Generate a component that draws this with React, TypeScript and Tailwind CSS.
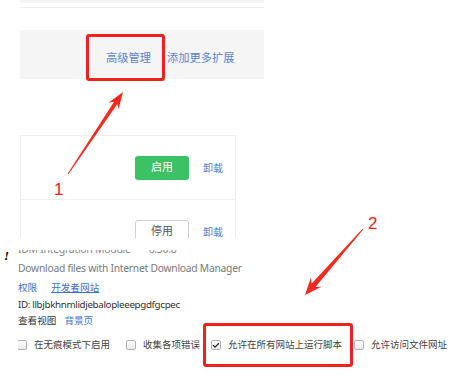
import { Check } from "lucide-react";

const cjk = "font-['Noto_Sans','Noto_Sans_CJK_SC',sans-serif]";

function Box({ checked }: { checked?: boolean }) {
  return (
    <span className="w-[10px] h-[10px] shrink-0 rounded-[2px] border border-[#b3b3b3] bg-gradient-to-b from-white to-[#e9e9e9] flex items-center justify-center">
      {checked && <Check size={9} strokeWidth={3.5} className="text-[#222]" />}
    </span>
  );
}

function ExtRow({ on }: { on: boolean }) {
  return (
    <div className="h-[63px] flex items-center justify-end pr-[12px] gap-[14px]">
      {on ? (
        <button className="w-[54px] h-[24px] rounded-[3px] bg-[#3cc164] text-white text-[11px]">
          启用
        </button>
      ) : (
        <button className="w-[54px] h-[24px] rounded-[3px] bg-white border border-[#cfcfcf] text-[#555] text-[11px]">
          停用
        </button>
      )}
      <span className="text-[10px] text-[#4f7ed6] mt-[2px]">卸载</span>
    </div>
  );
}

export default function App() {
  const opts = [
    { label: "在无痕模式下启用", ml: "ml-0", checked: false },
    { label: "收集各项错误", ml: "ml-[16px]", checked: false },
    { label: "允许在所有网站上运行脚本", ml: "ml-[11px]", checked: true },
    { label: "允许访问文件网址", ml: "ml-[12px]", checked: false },
  ];

  return (
    <div className={`relative w-[474px] h-[389px] overflow-hidden bg-white ${cjk}`}>
      {/* top strip */}
      <div className="ml-[20px] w-[244px] h-[3px] bg-[#f6f6f6]" />
      <div className="ml-[20px] w-[244px] mt-[4px] h-px bg-[#eeeeee]" />
      <div className="ml-[20px] w-[244px] mt-[22px] h-[49px] bg-[#f5f5f5] flex items-start pl-[86px] pt-[21px] gap-[16px] text-[11.25px] leading-[14px] text-[#5b86d6]">
        <span>高级管理</span>
        <span>添加更多扩展</span>
      </div>

      {/* extension card */}
      <div className="ml-[20px] mt-[56px] w-[216px] h-[103px] overflow-hidden border border-b-0 border-[#ececec]">
        <ExtRow on />
        <div className="h-px bg-[#f0f0f0]" />
        <ExtRow on={false} />
      </div>

      {/* details */}
      <div className="mt-[12px] flex">
        <div className="w-[18px] pl-[4px] pt-[1px] text-[13px] leading-[10px] font-bold text-black font-['Liberation_Serif',serif] italic">
          !
        </div>
        <div className="flex flex-col overflow-hidden h-[120px]">
          <div className="-mt-[10px] h-[18px] leading-[18px] text-[10.5px] text-[#888] whitespace-nowrap tracking-[-0.3px]">
            IDM Integration Module<span className="ml-[18px]">6.30.8</span>
          </div>
          <div className="mt-[1px] h-[18px] leading-[18px] text-[10.3px] text-[#7a7a7a] whitespace-nowrap tracking-[-0.25px]">
            Download files with Internet Download Manager
          </div>
          <div className="mt-[2px] h-[18px] leading-[18px] text-[9.6px] flex gap-[14px] text-[#3f6fcd]">
            <span>权限</span>
            <span className="underline">开发者网站</span>
          </div>
          <div className="h-[16px] leading-[16px] text-[9.8px] text-[#333] whitespace-nowrap tracking-[-0.35px]">
            ID: llbjbkhnmlidjebalopleeepgdfgcpec
          </div>
          <div className="h-[16px] leading-[16px] text-[9.6px] flex gap-[8px]">
            <span className="text-[#333]">查看视图</span>
            <span className="text-[#3f6fcd]">背景页</span>
          </div>
          <div className="mt-[6px] h-[20px] -ml-px flex items-center text-[9.5px] text-[#444] whitespace-nowrap">
            {opts.map((o) => (
              <div key={o.label} className={`flex items-center gap-[7px] ${o.ml}`}>
                <Box checked={o.checked} />
                <span>{o.label}</span>
              </div>
            ))}
          </div>
        </div>
      </div>

      {/* annotations */}
      <div className="absolute left-[86px] top-[34px] w-[79px] h-[47px] border-[3px] border-[#f1211b] rounded-[3px]" />
      <div className="absolute left-[203px] top-[323px] w-[150px] h-[44px] border-[3px] border-[#f1211b] rounded-[3px]" />
      <span className="absolute left-[54px] top-[180px] text-[17px] leading-[20px] text-[#f1211b] font-['Liberation_Sans',sans-serif]">
        1
      </span>
      <span className="absolute left-[368px] top-[214px] text-[17px] leading-[20px] text-[#f1211b] font-['Liberation_Sans',sans-serif]">
        2
      </span>
      <svg className="absolute left-0 top-0" width="474" height="389" viewBox="0 0 474 389">
        <polygon
          fill="#f52a1c"
          points="68.4,174.3 117.4,103.9 118.5,109.5 123,92 108.5,102.8 114.1,101.7 67.6,173.7"
        />
        <polygon
          fill="#f52a1c"
          points="363.4,229.3 315.5,286.9 321.5,286.8 305,295 310.9,277.6 311.7,283.6 362.6,228.7"
        />
      </svg>
    </div>
  );
}
